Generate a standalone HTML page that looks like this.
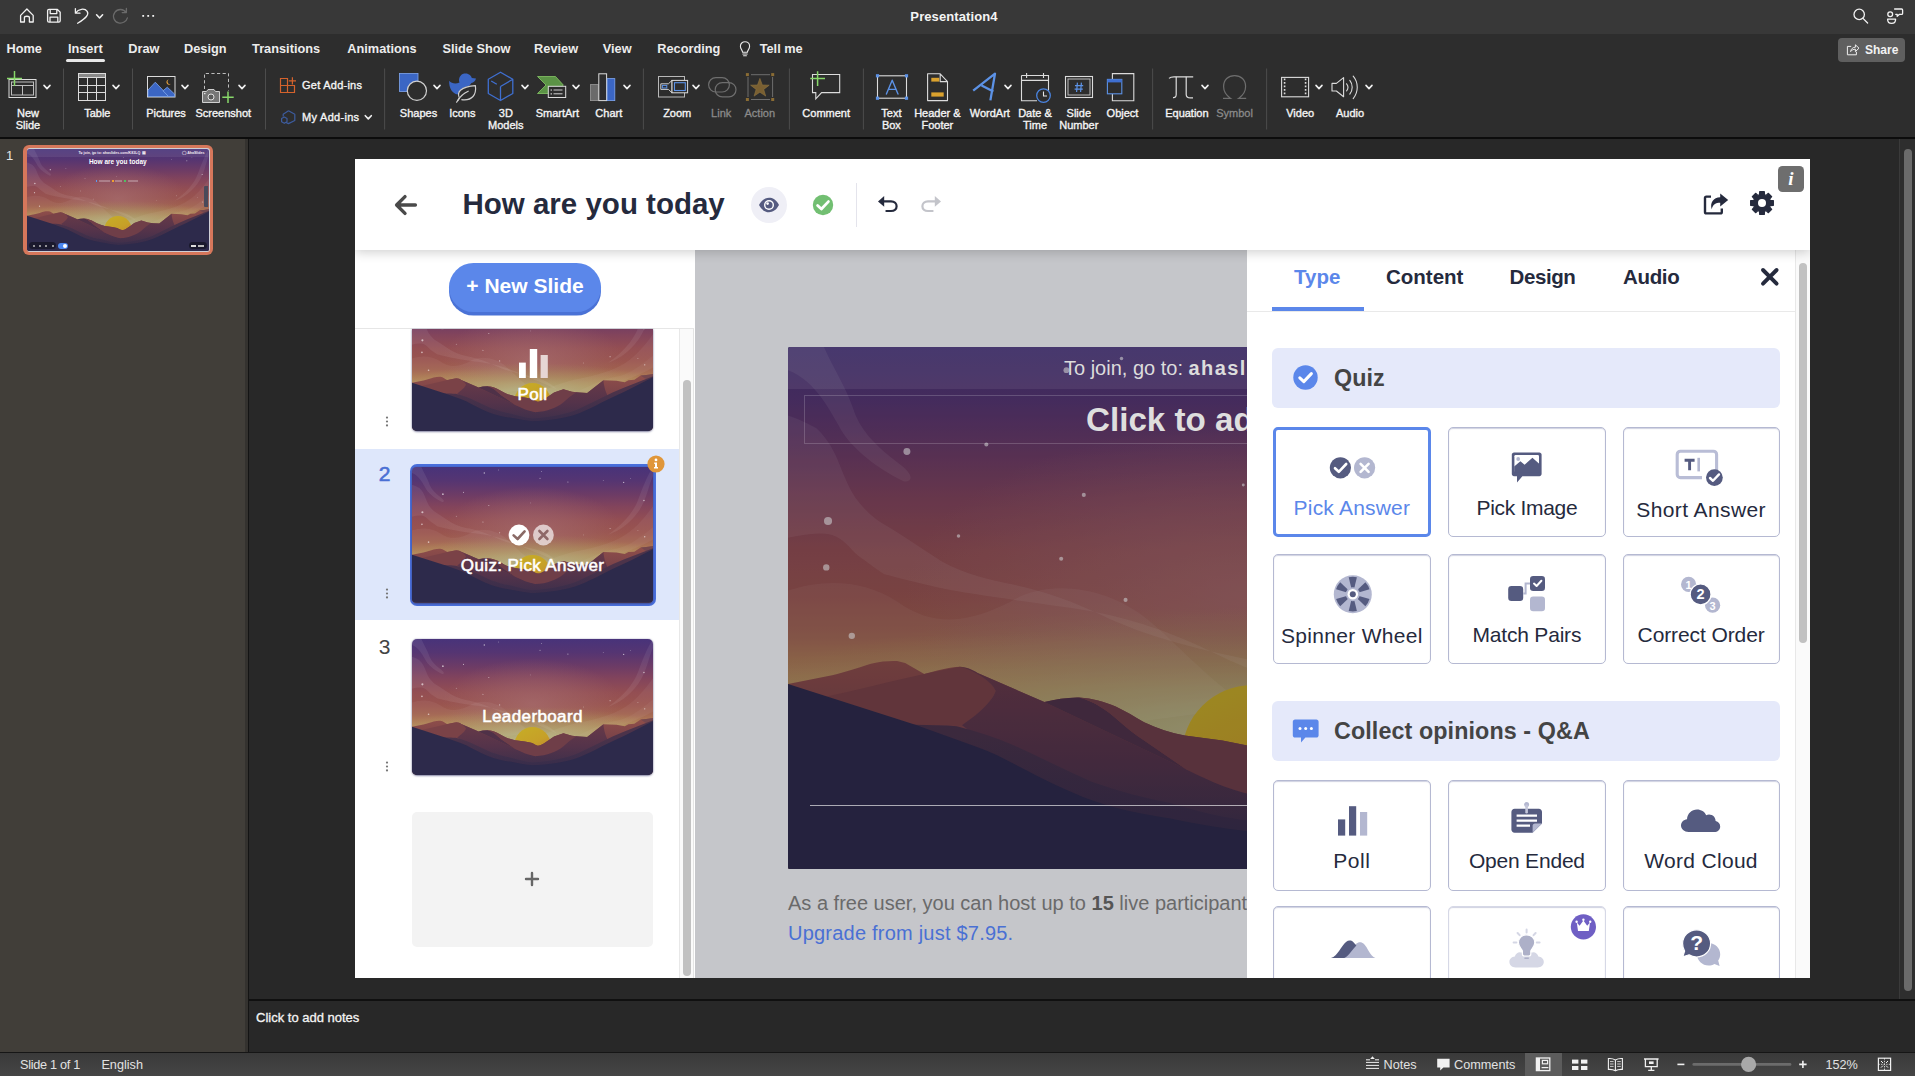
<!DOCTYPE html>
<html lang="en"><head><meta charset="utf-8"><title>Presentation4</title>
<style>
html,body{margin:0;padding:0}
body{width:1915px;height:1076px;overflow:hidden;background:#282828;position:relative;font-family:"Liberation Sans",sans-serif}
#leftpanel{position:absolute;left:0;top:139px;width:245px;height:915px;background:#413e39}
#leftedge{position:absolute;left:245px;top:139px;width:3px;height:914px;background:#34322f}
#leftline{position:absolute;left:247.5px;top:139px;width:1.5px;height:914px;background:#141414}
#editor{position:absolute;left:249px;top:139px;width:1666px;height:861px;background:#282828}
#vscroll{position:absolute;left:1899px;top:139px;width:16px;height:860px;background:#2e2e2e;border-left:1px solid #3a3a3a;box-sizing:border-box}
#vthumb{position:absolute;left:1904px;top:148.8px;width:8px;height:842.5px;border-radius:4px;background:#6b6b6b}
#notesline{position:absolute;left:249px;top:999px;width:1666px;height:1.5px;background:#101010}
#notes{position:absolute;left:249px;top:1000.5px;width:1666px;height:52px;background:#282828}
#notestxt{position:absolute;left:256px;top:1010px;font:13px "Liberation Sans",sans-serif;color:#f4f4f4;-webkit-text-stroke:0.3px #f4f4f4;white-space:nowrap}
#status{position:absolute;left:0;top:1053.4px;width:1915px;height:23px;background:linear-gradient(#3a3a3a,#454545)}
#statusline{position:absolute;left:0;top:1052.4px;width:1915px;height:1.2px;background:#161616}
.st{position:absolute;top:1057.8px;font:12.7px "Liberation Sans",sans-serif;color:#e2e2e2;white-space:nowrap}
.pnum{position:absolute;left:6px;top:148px;font:13px "Liberation Sans",sans-serif;color:#e6e6e6}
#pthumbsel{position:absolute;left:23px;top:145px;width:190px;height:110px;border-radius:6px;background:#d6775b}
#pthumbin{position:absolute;left:26.5px;top:148px;width:183.4px;height:103.6px;border-radius:3px;background:#cfcfd6;overflow:hidden}
#pthumbimg{position:absolute;left:0.8px;top:0.8px;width:181.8px;height:102.1px;border-radius:2.5px;overflow:hidden}

#titlebar{position:absolute;left:0;top:0;width:1915px;height:33.5px;background:#383838;}
.doctitle{position:absolute;left:0;width:1908px;top:8.7px;text-align:center;font:bold 13px "Liberation Sans",sans-serif;color:#f4f4f4;letter-spacing:0.1px}
#ribbon{position:absolute;left:0;top:0;width:1915px;height:137px;}
#ribbonbg{position:absolute;left:0;top:33px;width:1915px;height:104px;background:#2d2d2d}
#ribline{position:absolute;left:0;top:137px;width:1915px;height:2px;background:#0c0c0c}
.tab{position:absolute;top:40.8px;width:120px;text-align:center;font:bold 12.75px "Liberation Sans",sans-serif;color:#ececec;white-space:nowrap}
.tabline{position:absolute;left:66px;top:59px;width:39px;height:3px;border-radius:1.5px;background:#e8e8e8}
.share{position:absolute;left:1838px;top:38px;width:67px;height:24px;border-radius:4px;background:#5f5f5f}
.share span{position:absolute;left:27px;top:5px;font:bold 12px "Liberation Sans",sans-serif;color:#f2f2f2}
.rl{position:absolute;top:107px;width:100px;text-align:center;font:11px/12px "Liberation Sans",sans-serif;color:#f4f4f4;white-space:nowrap;-webkit-text-stroke:0.35px #f4f4f4}
.rl.dim{color:#8a8a8a;-webkit-text-stroke:0.3px #8a8a8a}
.rt{position:absolute;font:11px/12px "Liberation Sans",sans-serif;color:#f4f4f4;white-space:nowrap;-webkit-text-stroke:0.35px #f4f4f4}

#frame{position:absolute;left:0;top:0;width:1915px;height:1076px;clip-path:inset(159px 105px 98px 355px)}
#framebg{position:absolute;left:355px;top:159px;width:1455px;height:819px;background:#fff}
#center{position:absolute;left:695px;top:250px;width:553px;height:730px;background:#c5c6ca}
#preview{position:absolute;left:788px;top:347px;width:928px;height:522px;overflow:hidden;border-radius:2px;background:#2d2a4b}
.dimmer{position:absolute;left:0;top:0;width:928px;height:522px;background:rgba(10,8,20,0.22)}
.joinbar{position:absolute;left:0;top:0;width:928px;height:42px;background:rgba(255,255,255,0.07)}
.jointxt{position:absolute;left:276px;top:10px;font:20px "Liberation Sans",sans-serif;color:#dcdcdc;white-space:nowrap}
.jointxt b{letter-spacing:1.4px}
.titlebox{position:absolute;left:16px;top:48px;width:896px;height:48.6px;border:1px solid rgba(255,255,255,0.18);box-sizing:border-box}
.clicktxt{position:absolute;left:298px;top:54px;font:bold 33.2px "Liberation Sans",sans-serif;color:#dedede;white-space:nowrap}
.pline{position:absolute;left:22px;top:458px;width:884px;height:1.4px;background:rgba(255,255,255,0.62)}
.free1{position:absolute;left:788px;top:891.5px;font:20px "Liberation Sans",sans-serif;color:#6a6a6a;white-space:nowrap}
.free1 b{color:#555}
.free2{position:absolute;left:788px;top:921.5px;letter-spacing:0.22px;font:20px "Liberation Sans",sans-serif;color:#4a70d4;white-space:nowrap}
#list{position:absolute;left:355px;top:250px;width:340px;height:730px;background:#fff}
#listsel{position:absolute;left:355px;top:449px;width:325px;height:171px;background:#dee7fb}
.listsep{position:absolute;left:355px;top:328px;width:339px;height:1px;background:#e6e6e6}
.thumb{position:absolute;overflow:hidden;box-shadow:0 1px 2px rgba(60,60,110,0.55), 0 0 1.5px rgba(60,60,110,0.5)}
.thumbsel{position:absolute;left:409.5px;top:464.3px;width:246.8px;height:141.6px;border-radius:7px;background:#4a70dc}
.tl{position:absolute;left:0;width:100%;text-align:center;letter-spacing:0.38px;font:17px "Liberation Sans",sans-serif;color:#fff;white-space:nowrap;-webkit-text-stroke:0.55px #fff}
.plusbox{position:absolute;left:412px;top:812px;width:241px;height:135px;border-radius:5px;background:#f3f3f3}
.num{position:absolute;left:374.6px;width:20px;text-align:center;font:21px "Liberation Sans",sans-serif;color:#444}
.num.sel{color:#4a70d4;-webkit-text-stroke:0.6px #4a70d4}
.ltrack{position:absolute;left:679px;top:329px;width:15px;height:650px;background:#fafafa;border-left:1px solid #e8e8e8;border-right:1px solid #e4e4e4;box-sizing:border-box}
.lthumb{position:absolute;left:683px;top:380px;width:8px;height:596px;border-radius:4px;background:#c1c1c1}
#listtop{position:absolute;left:355px;top:250px;width:340px;height:78px;background:#fff}
.newslide{position:absolute;left:449px;top:263px;width:152px;height:49px;border-radius:26px;background:#5b87ea;box-shadow:0 3.5px 0 #4a72d6}
.newslide span{position:absolute;left:0;width:152px;top:11px;text-align:center;font:bold 21px "Liberation Sans",sans-serif;color:#fff;white-space:nowrap}
#panel{position:absolute;left:1247px;top:250px;width:563px;height:730px;background:#fff}
.ptab{position:absolute;top:265px;font:bold 20.5px "Liberation Sans",sans-serif;color:#252a3d;white-space:nowrap}
.ptab.sel{color:#5b87ea}
.pline2{position:absolute;left:1247px;top:311px;width:548px;height:1px;background:#e9e9e9}
.punder{position:absolute;left:1272px;top:307px;width:92px;height:4px;background:#5b87ea}
.sect{position:absolute;left:1272px;width:508px;height:60px;border-radius:6px;background:#e5e9fa}
.sect span{position:absolute;left:62px;top:17.3px;letter-spacing:0.1px;font:bold 23.3px "Liberation Sans",sans-serif;color:#444;white-space:nowrap}
.card{position:absolute;box-sizing:border-box;border:1.8px solid #b5b9d2;border-radius:5px;background:#fff;box-shadow:inset 0 1px 1px rgba(120,125,170,0.35)}
.card.sel{border:3px solid #5b87ea;box-shadow:none}
.card.dimc{border-color:#d6d8e6}
.clabel{position:absolute;left:-10px;right:-10px;text-align:center;font:21px "Liberation Sans",sans-serif;color:#252a3d;white-space:nowrap}
.card.sel .clabel{color:#5b87ea;margin-top:-1.5px}
.onum{position:absolute;width:10px;text-align:center;font:bold 10px "Liberation Sans",sans-serif;color:#fff;line-height:12px}
.qmark{position:absolute;left:1688.6px;top:931.4px;width:16px;text-align:center;font:bold 21px "Liberation Sans",sans-serif;color:#fff}
.ptrack{position:absolute;left:1795px;top:250px;width:15px;height:730px;background:#fafafa;border-left:1px solid #e8e8e8;box-sizing:border-box}
.pthumb{position:absolute;left:1799.4px;top:263px;width:7.6px;height:380px;border-radius:4px;background:#c1c1c1}
#ahead{position:absolute;left:355px;top:159px;width:1455px;height:91px;background:#fff;box-shadow:0 2px 11px rgba(0,0,0,0.2)}
.atitle{position:absolute;left:462.5px;top:187px;font:bold 29.5px "Liberation Sans",sans-serif;color:#252a3d;white-space:nowrap}
.eyebg{position:absolute;left:751px;top:187px;width:36px;height:36px;border-radius:18px;background:#efeff6}
.hdiv{position:absolute;left:855.5px;top:183px;width:1.5px;height:44px;background:#e4e4ec}
.ibtn{position:absolute;left:1778px;top:166px;width:26px;height:26px;border-radius:4.5px;background:#6e6e6e;color:#fff;font:italic bold 19px "Liberation Serif",serif;text-align:center;line-height:25px}
</style></head>
<body>

<svg width="0" height="0" style="position:absolute;left:-10px;top:-10px">
<defs>
<linearGradient id="sky" x1="0" y1="0" x2="0" y2="1">
<stop offset="0" stop-color="#48337a"/>
<stop offset="0.10" stop-color="#553572"/>
<stop offset="0.20" stop-color="#6c3b66"/>
<stop offset="0.29" stop-color="#82445c"/>
<stop offset="0.39" stop-color="#934e53"/>
<stop offset="0.48" stop-color="#99544f"/>
<stop offset="0.55" stop-color="#a0604d"/>
<stop offset="0.60" stop-color="#aa744f"/>
<stop offset="0.65" stop-color="#b28a56"/>
<stop offset="0.72" stop-color="#b29a5e"/>
<stop offset="0.8" stop-color="#b09c62"/>
</linearGradient>
<radialGradient id="glow" cx="800" cy="430" r="600" gradientUnits="userSpaceOnUse" gradientTransform="translate(0 215) scale(1 0.5)">
<stop offset="0" stop-color="#a87074" stop-opacity="0.62"/>
<stop offset="0.5" stop-color="#a46c70" stop-opacity="0.36"/>
<stop offset="1" stop-color="#a06a6e" stop-opacity="0"/>
</radialGradient>
<radialGradient id="glow2" cx="800" cy="670" r="1000" gradientUnits="userSpaceOnUse" gradientTransform="translate(0 522.6) scale(1 0.22)">
<stop offset="0" stop-color="#b8b68a" stop-opacity="1"/>
<stop offset="0.25" stop-color="#b2aa78" stop-opacity="0.9"/>
<stop offset="0.6" stop-color="#ac9a64" stop-opacity="0.5"/>
<stop offset="1" stop-color="#aa8e5c" stop-opacity="0"/>
</radialGradient>
<linearGradient id="sun" x1="0" y1="0" x2="0.5" y2="1">
<stop offset="0" stop-color="#c6ae26"/>
<stop offset="0.55" stop-color="#c6a028"/>
<stop offset="1" stop-color="#c07a35"/>
</linearGradient>
<linearGradient id="mA" x1="0" y1="530" x2="0" y2="760" gradientUnits="userSpaceOnUse">
<stop offset="0" stop-color="#8f4e4a"/><stop offset="1" stop-color="#6a3a48"/>
</linearGradient>
<linearGradient id="mB" x1="0" y1="550" x2="0" y2="820" gradientUnits="userSpaceOnUse">
<stop offset="0" stop-color="#693a48"/><stop offset="0.6" stop-color="#54334a"/><stop offset="1" stop-color="#40304b"/>
</linearGradient>
<linearGradient id="mC" x1="0" y1="640" x2="0" y2="840" gradientUnits="userSpaceOnUse">
<stop offset="0" stop-color="#4c334a"/><stop offset="1" stop-color="#382d4b"/>
</linearGradient>
<symbol id="scene" viewBox="0 0 1600 900" preserveAspectRatio="none">
<rect width="1600" height="900" fill="url(#sky)"/>
<rect width="1600" height="900" fill="url(#glow)"/>
<rect width="1600" height="900" fill="url(#glow2)"/>
<!-- wavy translucent bands -->
<path d="M0,0 L62,0 C80,40 100,70 112,105 C122,140 150,170 190,200 C215,218 218,232 200,232 C165,215 120,185 96,150 C72,110 50,60 0,40Z" fill="#fff" fill-opacity="0.075"/>
<path d="M0,118 C20,125 35,132 49,140 C70,160 80,180 89,203 C100,230 108,250 121,266 C140,290 155,300 175,311 C205,330 235,350 264,369 C305,392 350,402 390,410 C440,420 495,440 542,463 C620,500 700,520 800,540 C880,560 930,590 960,625 C880,585 800,560 740,530 C660,490 590,468 520,455 C430,440 330,430 255,414 C215,405 190,398 166,392 C148,380 135,370 121,360 C105,345 95,330 76,324 C50,318 25,324 0,329Z" fill="#fff" fill-opacity="0.07"/>
<path d="M0,420 C60,400 130,400 190,440 C260,490 330,470 400,430 C470,400 560,420 620,470 C680,520 740,590 800,620 L500,660 L0,600Z" fill="#fff" fill-opacity="0.05"/>
<path d="M1600,60 C1570,120 1560,220 1500,300 C1440,380 1380,420 1300,450 C1400,380 1470,300 1500,220 C1530,140 1560,60 1600,0Z" fill="#fff" fill-opacity="0.07"/>
<path d="M1600,260 C1540,340 1480,420 1380,470 C1280,520 1180,540 1080,560 C960,590 900,620 850,650 L1200,650 C1330,590 1460,560 1600,480Z" fill="#fff" fill-opacity="0.05"/>
<path d="M1600,400 C1520,460 1460,520 1360,540 C1260,560 1180,600 1100,640 L1600,620Z" fill="#fff" fill-opacity="0.04"/>
<!-- stars -->
<g fill="#fff" fill-opacity="0.6">
<circle cx="205" cy="180" r="6"/><circle cx="69" cy="300" r="7"/><circle cx="66" cy="380" r="5.5"/><circle cx="110" cy="498" r="5.5"/>
<circle cx="342" cy="168" r="3.5"/><circle cx="510" cy="255" r="3.5"/><circle cx="294" cy="326" r="3"/><circle cx="471" cy="365" r="3.5"/><circle cx="582" cy="436" r="3.5"/>
<circle cx="480" cy="40" r="5"/><circle cx="575" cy="20" r="3"/><circle cx="860" cy="30" r="3"/><circle cx="850" cy="75" r="3.5"/><circle cx="1035" cy="100" r="3.5"/>
<circle cx="1270" cy="90" r="3"/><circle cx="1405" cy="102" r="4.5"/><circle cx="1450" cy="76" r="2.5"/><circle cx="1540" cy="222" r="5"/>
<circle cx="1315" cy="408" r="3.5"/><circle cx="1500" cy="420" r="3"/><circle cx="1545" cy="462" r="4.5"/><circle cx="785" cy="238" r="2.5"/>
<circle cx="1140" cy="450" r="2.5"/>
</g>
<!-- sun -->
<circle cx="800" cy="704" r="121" fill="url(#sun)"/>
<!-- R1 back ridge (lit) -->
<path d="M0,581 L76,566 C100,560 125,552 143,546 C160,542 175,541 188,541.5 L202,545 L235,564 C255,558 280,552 296,551.5 C308,552 318,557 327,562 L442,612 C462,608 482,604 502,604.5 C525,606 545,612 565,620 C582,628 598,638 614,647 C636,658 660,665 684,670 L749,678.5 L792,687 C810,694 822,704 835,706 C850,706 862,700 875,692 L914,665 L943,645 L1005,623 L1062,640 L1111,646 L1163,649 L1271,564 L1358,567 L1412,577 L1437,564 L1476,561 L1518,533 L1555,530 L1600,523 V900 H0Z" fill="url(#mA)"/>
<!-- B: rounded darker blob on left -->
<path d="M60,604 C130,590 215,566 296,551.5 C325,560 352,578 358,593 C352,612 325,635 300,652 L219,651.5Z" fill="#7a4247"/>
<!-- C: shadow face of peak 2 -->
<path d="M296,551.5 C308,552 318,557 327,562 L442,612 L686,728 L820,776 L840,776 L840,842 L390,719 L300,652 C325,635 352,612 358,593 C352,578 325,560 296,551.5Z" fill="url(#mB)"/>
<!-- D: dark face of small peak 3 -->
<path d="M442,612 C462,608 482,604 502,604.5 C530,612 548,626 565,640 C582,655 598,668 614,678.5 L686,728Z" fill="#4f3148"/>
<!-- E: lit slope towards sun -->
<path d="M502,604.5 C525,606 545,612 565,620 C582,628 598,638 614,647 C636,658 660,665 684,670 L749,678.5 L792,687 C810,694 822,704 835,706 C850,706 862,700 875,692 L914,665 L943,645 L1005,623 L1062,640 L1090,644 C1060,660 1030,690 1000,715 C960,745 900,772 820,776 C770,768 730,750 686,728 L614,678.5 C598,668 582,655 565,640 C548,626 530,612 502,604.5Z" fill="#6f3e48"/>
<!-- C': shadow face of right peak -->
<path d="M1271,564 L1163,649 L1111,646 L1090,644 C1060,660 1030,690 1000,715 C960,745 900,772 820,776 L820,842 L1100,805 L1259,758 L1313,689 C1300,670 1290,650 1282,625 C1275,600 1272,580 1271,564Z" fill="url(#mB)"/>
<!-- right far edge darker tip -->
<path d="M1518,533 L1555,530 L1600,523 V546 L1560,562 C1545,550 1530,540 1518,533Z" fill="#6a4550" fill-opacity="0.7"/>
<!-- F: lower band above navy -->
<path d="M219.5,651.5 C245,652 270,652 291,654 C325,662 358,674 390,687 C435,708 480,730 524.6,750 C570,766 615,778 659,786 C705,800 750,812 800,817 C860,814 910,806 960,797 C1020,785 1070,770 1110,752 C1160,730 1210,704 1260,680 C1310,655 1360,632 1410,612 L1600,538 V900 H0 V640Z" fill="url(#mC)"/>
<!-- navy front -->
<path d="M0,581 L219.5,651.5 L327,690 C350,698 370,708 390,719 C440,745 480,765 525,782 C570,798 615,806 659,813 C710,824 750,830 800,836 C860,832 910,828 960,820 C1020,810 1070,798 1110,782 C1160,762 1210,738 1259,712 C1310,686 1360,662 1410,640 C1470,612 1540,575 1600,545 V900 H0Z" fill="#2d2a4b"/>
</symbol>
</defs>
</svg>

<div id="ribbonbg"></div><div id="ribline"></div>
<div id="titlebar"><svg style="position:absolute;left:0;top:0" width="1915" height="33" viewBox="0 0 1915 33"><path d="M20.6,15.4 L26.9,9 L33.2,15.4 V22 H29.4 V17.6 C29.4,15.8 24.4,15.8 24.4,17.6 V22 H20.6Z" fill="none" stroke="#f2f2f2" stroke-width="1.3" stroke-linejoin="round" stroke-linecap="round"/><path d="M47.6,10.8 C47.6,10 48.2,9.4 49,9.4 H57.4 L60.2,12.2 V20.8 C60.2,21.6 59.6,22.2 58.8,22.2 H49 C48.2,22.2 47.6,21.6 47.6,20.8Z M50.2,9.4 V13.6 H56.8 V9.4 M50,22.2 V17.2 H57.8 V22.2" fill="none" stroke="#f2f2f2" stroke-width="1.3" stroke-linejoin="round" stroke-linecap="round"/><path d="M75.4,8.6 V13.2 H80 M75.6,13 C78.4,8.8 84.6,7.8 87.2,11.4 C89.2,14.6 86.4,17.8 77.6,23.2" fill="none" stroke="#f2f2f2" stroke-width="1.3" stroke-linejoin="round" stroke-linecap="round"/><path d="M96.6,14.799999999999999 L99.6,18.0 L102.6,14.799999999999999" fill="none" stroke="#f0f0f0" stroke-width="1.6" stroke-linecap="round" stroke-linejoin="round"/><path d="M126.4,8.4 V12.6 H122.2 M126.2,12.6 C123.6,8.6 117.6,8.4 114.8,12.4 C112,16.4 114,21.6 118.6,22.8 C122.6,23.8 126.4,21.4 127.4,17.8" fill="none" stroke="#6a6a6a" stroke-width="1.3" stroke-linecap="round" stroke-linejoin="round"/><rect x="142.29999999999998" y="15" width="1.8" height="1.8" fill="#f2f2f2"/><rect x="147.29999999999998" y="15" width="1.8" height="1.8" fill="#f2f2f2"/><rect x="152.29999999999998" y="15" width="1.8" height="1.8" fill="#f2f2f2"/><circle cx="1859.2" cy="14.4" r="5.2" fill="none" stroke="#f2f2f2" stroke-width="1.3" stroke-linejoin="round" stroke-linecap="round"/><path d="M1863,18.4 L1867.6,23" fill="none" stroke="#f2f2f2" stroke-width="1.3" stroke-linejoin="round" stroke-linecap="round"/><circle cx="1890.2" cy="14.2" r="2.4" fill="none" stroke="#f2f2f2" stroke-width="1.3" stroke-linejoin="round" stroke-linecap="round"/><path d="M1887.6,19.2 H1895.6 C1895.6,22.2 1893.8,23.4 1891.6,23.4 C1889.4,23.4 1887.6,22.2 1887.6,19.2Z" fill="none" stroke="#f2f2f2" stroke-width="1.3" stroke-linejoin="round" stroke-linecap="round"/><path d="M1894.6,9 H1901.6 C1902.2,9 1902.6,9.4 1902.6,10 V13.4 C1902.6,14 1902.2,14.4 1901.6,14.4 H1899.2 L1897.2,16.2 V14.4 H1895.8" fill="none" stroke="#f2f2f2" stroke-width="1.3" stroke-linejoin="round" stroke-linecap="round"/></svg><div class="doctitle">Presentation4</div></div>
<div id="ribbon">
<div class="tab" style="left:-35.8px">Home</div>
<div class="tab" style="left:25.3px">Insert</div>
<div class="tab" style="left:83.9px">Draw</div>
<div class="tab" style="left:145.3px">Design</div>
<div class="tab" style="left:226.1px">Transitions</div>
<div class="tab" style="left:322.0px">Animations</div>
<div class="tab" style="left:416.4px">Slide Show</div>
<div class="tab" style="left:496.1px">Review</div>
<div class="tab" style="left:557.2px">View</div>
<div class="tab" style="left:628.8px">Recording</div>
<div class="tab" style="left:721.2px">Tell me</div>
<div class="tabline"></div>
<svg style="position:absolute;left:737px;top:39px" width="16" height="20" viewBox="0 0 16 20"><path d="M5.6,13.2 C5.6,11.2 3.4,10.2 3.4,7.2 C3.4,4.6 5.4,2.8 8,2.8 C10.6,2.8 12.6,4.6 12.6,7.2 C12.6,10.2 10.4,11.2 10.4,13.2Z M5.8,15 H10.2 M6.6,16.8 H9.4" fill="none" stroke="#e8e8e8" stroke-width="1.1" stroke-linecap="round" stroke-linejoin="round"/></svg>
<div class="share"><svg width="14" height="13" viewBox="0 0 14 13" style="position:absolute;left:8px;top:5px"><path d="M5.2,3.4 H1.4 V11.8 H10.4 V8.8 M4.6,8.6 C5,5.8 7,4.2 9.4,4.2 V1.8 L13,5.2 L9.4,8.6 V6.2 C7.4,6.2 5.8,7 4.6,8.6Z" fill="none" stroke="#efefef" stroke-width="1" stroke-linejoin="round"/></svg><span>Share</span></div>
<svg style="position:absolute;left:0;top:0" width="1915" height="138" viewBox="0 0 1915 138"><rect x="63.0" y="68.5" width="1" height="61" fill="#4c4c4c"/><rect x="132.0" y="68.5" width="1" height="61" fill="#4c4c4c"/><rect x="265.0" y="68.5" width="1" height="61" fill="#4c4c4c"/><rect x="384.1" y="68.5" width="1" height="61" fill="#4c4c4c"/><rect x="642.9" y="68.5" width="1" height="61" fill="#4c4c4c"/><rect x="788.9" y="68.5" width="1" height="61" fill="#4c4c4c"/><rect x="862.9" y="68.5" width="1" height="61" fill="#4c4c4c"/><rect x="1152.1" y="68.5" width="1" height="61" fill="#4c4c4c"/><rect x="1266.1" y="68.5" width="1" height="61" fill="#4c4c4c"/><rect x="9" y="79.5" width="27" height="18" fill="none" stroke="#dcdcdc" stroke-width="1"/><rect x="11.5" y="82" width="22" height="13" fill="none" stroke="#bdbdbd" stroke-width="1"/><path d="M11.5,85.5 H33.5 M22.5,85.5 V95" stroke="#bdbdbd" stroke-width="1" fill="none"/><path d="M7,78.5 H22 M14.5,71 V86" stroke="#88d86a" stroke-width="1.5" fill="none"/><path d="M44,85.4 L47,88.6 L50,85.4" fill="none" stroke="#f0f0f0" stroke-width="1.6" stroke-linecap="round" stroke-linejoin="round"/><rect x="78.5" y="73.5" width="27" height="27" fill="none" stroke="#dcdcdc" stroke-width="1"/><rect x="79" y="74" width="26" height="3.5" fill="#8a8a8a"/><path d="M78.5,77.5 H105.5 M78.5,85.5 H105.5 M78.5,92.5 H105.5 M87.5,77.5 V100.5 M96.5,77.5 V100.5" stroke="#dcdcdc" stroke-width="1" fill="none"/><path d="M113,85.4 L116,88.6 L119,85.4" fill="none" stroke="#f0f0f0" stroke-width="1.6" stroke-linecap="round" stroke-linejoin="round"/><rect x="147.5" y="76.5" width="27.5" height="20.5" fill="#2a2a2a" stroke="#dcdcdc" stroke-width="1"/><path d="M148,96.5 L148,90 L155.3,82.2 L169,96.5Z" fill="#3b66c4" stroke="#7fa6ee" stroke-width="0.8" stroke-linejoin="round"/><path d="M163,90.8 L167.3,87.2 L174.5,94 L174.5,96.5 L168.5,96.5Z" fill="#3b66c4" stroke="#7fa6ee" stroke-width="0.8" stroke-linejoin="round"/><path d="M168.6,79.6 A2.6,2.6 0 1 0 171.2,83.6 A2.2,2.2 0 0 1 168.6,79.6Z" fill="#e8a23c"/><path d="M182,85.4 L185,88.6 L188,85.4" fill="none" stroke="#f0f0f0" stroke-width="1.6" stroke-linecap="round" stroke-linejoin="round"/><path d="M204.5,89 V73.5 H228.5 V90.5" fill="none" stroke="#bdbdbd" stroke-width="1" stroke-dasharray="3.2 2.4"/><path d="M202.5,91.5 H206.5 L208,89.5 H214 L215.5,91.5 H219.5 V102.5 H202.5Z" fill="#767676" stroke="#d0d0d0" stroke-width="1" stroke-linejoin="round"/><circle cx="211" cy="97" r="3" fill="#5a5a5a" stroke="#e0e0e0" stroke-width="1"/><rect x="204" y="93" width="1.5" height="1.2" fill="#e0e0e0"/><path d="M222.3,97.3 H233.7 M228,91.6 V103" stroke="#88d86a" stroke-width="1.5" fill="none"/><path d="M239,85.4 L242,88.6 L245,85.4" fill="none" stroke="#f0f0f0" stroke-width="1.6" stroke-linecap="round" stroke-linejoin="round"/><path d="M280.5,78.5 H287.5 V92.5 H280.5Z M287.5,85.5 H294.5 V92.5 H287.5 M280.5,85.5 H287.5" fill="none" stroke="#d4622c" stroke-width="1.2"/><path d="M288.8,80.8 H296 M292.4,77.2 V84.4" stroke="#d4622c" stroke-width="1.2" fill="none"/><path d="M288.5,110.8 L294.8,114.2 V120.5 L288.5,123.6 L285.5,122.2 M283.2,116.6 V114.2 L288.5,110.8" fill="none" stroke="#3d5c9e" stroke-width="1.2" stroke-linejoin="round"/><path d="M284.3,117 L287,118.6 V121.7 L284.3,123.3 L281.6,121.7 V118.6Z" fill="none" stroke="#3d5c9e" stroke-width="1.2" stroke-linejoin="round"/><path d="M365.3,115.7 L368.3,118.89999999999999 L371.3,115.7" fill="none" stroke="#f0f0f0" stroke-width="1.6" stroke-linecap="round" stroke-linejoin="round"/><rect x="399.5" y="73.5" width="18.5" height="18" fill="#3b66c4" stroke="#7fa6ee" stroke-width="0.8"/><circle cx="416.9" cy="90.8" r="9.6" fill="#2d2d2d" stroke="#cfcfcf" stroke-width="1.2"/><path d="M434,85.4 L437,88.6 L440,85.4" fill="none" stroke="#f0f0f0" stroke-width="1.6" stroke-linecap="round" stroke-linejoin="round"/><path d="M449.2,80.8 C451.5,83.5 455.5,84.2 459.5,82.6 C458.2,79.2 459.8,74.6 464.2,73.6 C468.4,72.8 471.4,75.6 471.8,78 L476,78.6 C475.4,81.2 473.6,82.6 471.4,83 C470.6,84.4 469.6,85.4 468.6,86.2 C464,86.4 459.6,89.4 457.6,94.6 C452.6,93.6 448.8,88.6 449.2,80.8Z" fill="#3b66c4"/><path d="M456.6,102.2 C459,97.6 463,93.8 468.2,91.4" fill="none" stroke="#cfcfcf" stroke-width="1.2" stroke-linecap="round"/><path d="M459.2,97.6 C456.8,92.4 460.4,86.6 475.4,85.6 C476.6,94.4 472.4,101.2 461.4,99.6" fill="#2d2d2d" stroke="#cfcfcf" stroke-width="1.2" stroke-linejoin="round"/><path d="M457.8,100.6 C460,96.6 463.6,93.2 468.2,91.2" fill="none" stroke="#cfcfcf" stroke-width="1.2" stroke-linecap="round"/><path d="M500.5,72.2 L512.8,79.3 V93.5 L500.5,100.5 L488.3,93.5 V79.3Z M500.5,86.5 L512.8,79.3 M500.5,86.5 V100.5 M496.8,84.3 L491.2,81" fill="none" stroke="#3f6fd0" stroke-width="1.3" stroke-linejoin="round"/><path d="M522,85.4 L525,88.6 L528,85.4" fill="none" stroke="#f0f0f0" stroke-width="1.6" stroke-linecap="round" stroke-linejoin="round"/><path d="M537.5,76.5 H555.5 L563.3,85 L555.5,93.5 H537.5 L546,85Z" fill="#5b9346" stroke="#86c766" stroke-width="0.8" stroke-linejoin="round"/><rect x="548.3" y="86.3" width="17.4" height="11.2" fill="#2d2d2d" stroke="#dcdcdc" stroke-width="1"/><path d="M553.5,90 H562.5 M553.5,93.8 H562.5" stroke="#cfcfcf" stroke-width="1"/><rect x="550.6" y="89.4" width="1.3" height="1.3" fill="#cfcfcf"/><rect x="550.6" y="93.2" width="1.3" height="1.3" fill="#cfcfcf"/><path d="M573,85.4 L576,88.6 L579,85.4" fill="none" stroke="#f0f0f0" stroke-width="1.6" stroke-linecap="round" stroke-linejoin="round"/><rect x="590.5" y="84.6" width="7.8" height="16" fill="#6a6a6a" stroke="#9a9a9a" stroke-width="0.8"/><rect x="598.8" y="73.8" width="7.8" height="26.8" fill="#2d2d2d" stroke="#dcdcdc" stroke-width="1"/><rect x="607.2" y="78.6" width="7.6" height="22" fill="#3b66c4" stroke="#7fa6ee" stroke-width="0.8"/><path d="M624,85.4 L627,88.6 L630,85.4" fill="none" stroke="#f0f0f0" stroke-width="1.6" stroke-linecap="round" stroke-linejoin="round"/><rect x="658.5" y="76.5" width="26" height="20.5" fill="none" stroke="#b8b8b8" stroke-width="1"/><path d="M660.8,83.8 H668.4 L672,80.4 V92.8 L668.4,89.4 H660.8Z" fill="#2d2d2d" stroke="#cfcfcf" stroke-width="1" stroke-linejoin="round"/><rect x="662.4" y="85.4" width="4.4" height="2.6" fill="none" stroke="#5c92e6" stroke-width="1"/><rect x="672" y="80.4" width="15.6" height="12.4" fill="#2d2d2d" stroke="#dcdcdc" stroke-width="1"/><rect x="674.5" y="82.7" width="10.8" height="7.8" fill="none" stroke="#5c92e6" stroke-width="1.1"/><path d="M693,85.4 L696,88.6 L699,85.4" fill="none" stroke="#f0f0f0" stroke-width="1.6" stroke-linecap="round" stroke-linejoin="round"/><rect x="708.6" y="77.6" width="20.8" height="14.4" rx="7.2" fill="none" stroke="#6e6e6e" stroke-width="1.2"/><rect x="715.2" y="82.6" width="20.8" height="14.2" rx="7.1" fill="none" stroke="#6e6e6e" stroke-width="1.2"/><path d="M751,74.7 H770 M772.6,77 V97 M770,99.5 H751 M748,97 V77" fill="none" stroke="#6e6e6e" stroke-width="1"/><rect x="745.9" y="73.1" width="3" height="3" fill="#8a6c34"/><rect x="771.2" y="73.1" width="3" height="3" fill="#8a6c34"/><rect x="745.9" y="98.0" width="3" height="3" fill="#8a6c34"/><rect x="771.2" y="98.0" width="3" height="3" fill="#8a6c34"/><polygon points="759.9,78.4 762.3,85.0 769.2,85.2 763.7,89.4 765.7,96.1 759.9,92.2 754.1,96.1 756.1,89.4 750.6,85.2 757.5,85.0" fill="#7a6032" stroke="#8f7440" stroke-width="0.6"/><path d="M812.5,74.5 H839.7 V92.6 H821.6 L815.8,98.8 V92.6 H812.5Z" fill="none" stroke="#dcdcdc" stroke-width="1.1" stroke-linejoin="miter"/><rect x="809" y="70" width="11" height="12" fill="#2d2d2d" opacity="0"/><path d="M810.2,78.6 H825 M817.6,71.2 V86" stroke="#88d86a" stroke-width="1.5" fill="none"/><rect x="877.5" y="75.8" width="29" height="22.4" fill="none" stroke="#dcdcdc" stroke-width="1.1"/><rect x="875.9" y="74.2" width="3.2" height="3.2" fill="#5c92e6"/><rect x="904.9" y="74.2" width="3.2" height="3.2" fill="#5c92e6"/><rect x="875.9" y="96.60000000000001" width="3.2" height="3.2" fill="#5c92e6"/><rect x="904.9" y="96.60000000000001" width="3.2" height="3.2" fill="#5c92e6"/><path d="M886.4,94 L892.2,80.2 L898,94 M888.4,89.4 H896" fill="none" stroke="#5c92e6" stroke-width="1.4" stroke-linejoin="round" stroke-linecap="round"/><path d="M927.6,73.8 H940.2 L947.5,81.6 V100.6 H927.6Z M940.2,73.8 V81.6 H947.5" fill="none" stroke="#dcdcdc" stroke-width="1.1" stroke-linejoin="round"/><rect x="931.3" y="77.8" width="8" height="3.8" fill="#dba22e"/><rect x="931.3" y="92.4" width="12.4" height="4.2" fill="#dba22e"/><path d="M973.2,90.6 L995,73.6 L990.4,100.4 M981.6,85.4 L993.4,91.6" fill="none" stroke="#5c92e6" stroke-width="2.3" stroke-linejoin="round" stroke-linecap="butt"/><path d="M1005,85.4 L1008,88.6 L1011,85.4" fill="none" stroke="#f0f0f0" stroke-width="1.6" stroke-linecap="round" stroke-linejoin="round"/><path d="M1021.5,75.5 H1048.5 V94 M1037,100.8 H1021.5 V75.5 M1021.5,80.4 H1048.5 M1026.6,73 V78 M1043.5,73 V78" fill="none" stroke="#dcdcdc" stroke-width="1.1"/><circle cx="1043.5" cy="95.6" r="6.8" fill="#2d2d2d" stroke="#4a84e0" stroke-width="1.3"/><path d="M1043.5,91.6 V96 H1047" fill="none" stroke="#e6e6e6" stroke-width="1.1"/><rect x="1065.5" y="76.5" width="27" height="21" fill="none" stroke="#dcdcdc" stroke-width="1.1"/><rect x="1068" y="79" width="22" height="16" fill="none" stroke="#bdbdbd" stroke-width="1"/><path d="M1077.4,82.6 L1076.6,92 M1081.4,82.6 L1080.6,92 M1075,85.6 H1083.2 M1074.6,89.2 H1082.8" fill="none" stroke="#5c92e6" stroke-width="1.2"/><path d="M1112.4,79 V73.6 H1133.8 V100.8 H1112.4 V94" fill="none" stroke="#dcdcdc" stroke-width="1.1"/><rect x="1107.4" y="79.4" width="14.4" height="14.4" fill="#2d2d2d" stroke="#5c92e6" stroke-width="1.1"/><rect x="1107.4" y="79.4" width="14.4" height="3" fill="#3f6fd0"/><path d="M1169,78.4 C1170.4,77 1172,76.8 1174,76.8 H1193.2" fill="none" stroke="#dcdcdc" stroke-width="1.2"/><path d="M1176.2,76.8 V94.6 C1176.2,96.8 1175,97.8 1173,97.6" fill="none" stroke="#dcdcdc" stroke-width="1.2"/><path d="M1186.2,76.8 V94.4 C1186.2,97 1188,97.8 1190.4,97.8 H1193" fill="none" stroke="#dcdcdc" stroke-width="1.2"/><path d="M1202,85.4 L1205,88.6 L1208,85.4" fill="none" stroke="#f0f0f0" stroke-width="1.6" stroke-linecap="round" stroke-linejoin="round"/><path d="M1223,98.4 H1230.6 C1226.4,95.6 1223.6,91.6 1223.6,86.6 C1223.6,79.8 1228.2,75.6 1234.6,75.6 C1241,75.6 1245.6,79.8 1245.6,86.6 C1245.6,91.6 1242.8,95.6 1238.6,98.4 H1246.2" fill="none" stroke="#6e6e6e" stroke-width="1.2"/><rect x="1281.6" y="77.4" width="27" height="19.4" fill="none" stroke="#dcdcdc" stroke-width="1.1"/><path d="M1284.6,78.6 V96 M1305.6,78.6 V96" stroke="#dcdcdc" stroke-width="1.6" stroke-dasharray="1.6 1.9" fill="none"/><path d="M1316,85.4 L1319,88.6 L1322,85.4" fill="none" stroke="#f0f0f0" stroke-width="1.6" stroke-linecap="round" stroke-linejoin="round"/><path d="M1332,83.4 H1336.4 L1343.6,77.6 V96.8 L1336.4,91 H1332Z" fill="none" stroke="#dcdcdc" stroke-width="1.1" stroke-linejoin="round"/><path d="M1346.6,83.8 C1348.2,85.8 1348.2,88.8 1346.6,90.8 M1349.8,80.4 C1353,84.2 1353,90.4 1349.8,94.2 M1353.2,76.2 C1358.6,82.6 1358.6,92 1353.2,98.6" fill="none" stroke="#dcdcdc" stroke-width="1.1" stroke-linecap="round"/><path d="M1366,85.4 L1369,88.6 L1372,85.4" fill="none" stroke="#f0f0f0" stroke-width="1.6" stroke-linecap="round" stroke-linejoin="round"/></svg>
<div class="rl" style="left:-22.0px">New<br>Slide</div>
<div class="rl" style="left:47.3px">Table</div>
<div class="rl" style="left:116.0px">Pictures</div>
<div class="rl" style="left:173.3px">Screenshot</div>
<div class="rl" style="left:368.5px">Shapes</div>
<div class="rl" style="left:412.3px">Icons</div>
<div class="rl" style="left:455.8px">3D<br>Models</div>
<div class="rl" style="left:507.4px">SmartArt</div>
<div class="rl" style="left:558.8px">Chart</div>
<div class="rl" style="left:627.2px">Zoom</div>
<div class="rl dim" style="left:671.2px">Link</div>
<div class="rl dim" style="left:709.8px">Action</div>
<div class="rl" style="left:776.2px">Comment</div>
<div class="rl" style="left:841.4px">Text<br>Box</div>
<div class="rl" style="left:887.4px">Header &amp;<br>Footer</div>
<div class="rl" style="left:939.8px">WordArt</div>
<div class="rl" style="left:985.0px">Date &amp;<br>Time</div>
<div class="rl" style="left:1028.8px">Slide<br>Number</div>
<div class="rl" style="left:1072.5px">Object</div>
<div class="rl" style="left:1136.9px">Equation</div>
<div class="rl dim" style="left:1184.5px">Symbol</div>
<div class="rl" style="left:1250.2px">Video</div>
<div class="rl" style="left:1300.0px">Audio</div>
<div class="rt" style="left:302px;top:79px;letter-spacing:0.25px">Get Add-ins</div>
<div class="rt" style="left:302px;top:111px;letter-spacing:0.3px">My Add-ins</div>
</div>
<div id="leftpanel"></div><div id="leftedge"></div><div id="leftline"></div>
<div class="pnum">1</div>
<div id="pthumbsel"></div><div id="pthumbin"><div id="pthumbimg">
<svg class="" style="position:absolute;left:0px;top:0px;" width="182" height="103.4"><use href="#scene" x="0" y="0" width="182" height="103.4"/></svg>
<div style="position:absolute;left:0;top:0;width:181px;height:8px;background:rgba(255,255,255,0.08)"></div>
<div style="position:absolute;left:0;width:181px;top:9.2px;text-align:center;font:bold 6.5px 'Liberation Sans',sans-serif;color:#fff;white-space:nowrap">How are you today</div>
<div style="position:absolute;left:0;width:170px;top:2.2px;text-align:center;font:bold 3.6px 'Liberation Sans',sans-serif;color:#f0e8f0;white-space:nowrap">To join, go to: ahaslides.com/K83LQ &nbsp;&#9638;</div>
<div style="position:absolute;left:155px;top:2.2px;font:bold 3.6px 'Liberation Sans',sans-serif;color:#f0e8f0;white-space:nowrap">&#9711; AhaSlides</div>
<div style="position:absolute;left:68.5px;top:31.4px;width:1.7px;height:1.7px;background:#5b9bf0"></div><div style="position:absolute;left:72px;top:30.6px;width:11px;height:1.6px;background:rgba(255,255,255,0.26);margin-top:1px"></div>
<div style="position:absolute;left:84.6px;top:31.4px;width:1.7px;height:1.7px;background:#f0a030"></div><div style="position:absolute;left:88.2px;top:30.6px;width:7px;height:1.6px;background:rgba(255,255,255,0.26);margin-top:1px"></div>
<div style="position:absolute;left:97px;top:31.4px;width:1.7px;height:1.7px;background:#50c060"></div><div style="position:absolute;left:100.6px;top:30.6px;width:10px;height:1.6px;background:rgba(255,255,255,0.26);margin-top:1px"></div>
<div style="position:absolute;left:176.6px;top:37px;width:4.4px;height:21px;background:#4a4a5a;border-radius:1px 0 0 1px"></div>
<div style="position:absolute;left:2px;top:93.6px;width:27px;height:7px;border-radius:3.5px;background:rgba(20,20,35,0.75)"></div>
<div style="position:absolute;left:5.5px;top:95.6px;width:2.4px;height:2.4px;border-radius:1px;background:#bbb;margin:0.3px"></div>
<div style="position:absolute;left:11.5px;top:95.6px;width:2.4px;height:2.4px;border-radius:1px;background:#bbb;margin:0.3px"></div>
<div style="position:absolute;left:17.5px;top:95.6px;width:2.4px;height:2.4px;border-radius:1px;background:#bbb;margin:0.3px"></div>
<div style="position:absolute;left:24px;top:95.6px;width:2.4px;height:2.4px;border-radius:1px;background:#bbb;margin:0.3px"></div>
<div style="position:absolute;left:31px;top:94px;width:9.6px;height:6px;border-radius:3px;background:#4a86f0"></div><div style="position:absolute;left:36.2px;top:95px;width:4px;height:4px;border-radius:2px;background:#fff"></div>
<div style="position:absolute;left:161.6px;top:93.6px;width:18px;height:7px;border-radius:3.5px;background:rgba(20,20,35,0.75)"></div>
<div style="position:absolute;left:164px;top:96px;width:5px;height:2.4px;background:#ddd"></div><div style="position:absolute;left:171px;top:96px;width:6px;height:2.4px;background:#bbb"></div>
</div></div>
<div id="editor"></div>
<div id="vscroll"></div><div id="vthumb"></div>
<div id="notesline"></div><div id="notes"></div><div id="notestxt">Click to add notes</div>
<div id="frame"><div id="framebg"></div>
<div id="center"></div>
<div id="preview">
<svg class="" style="position:absolute;left:0px;top:0px;" width="928" height="522"><use href="#scene" x="0" y="0" width="928" height="522"/></svg>
<div class="dimmer"></div>
<div class="joinbar"></div>
<div class="jointxt">To join, go to: <b>ahaslides.com/K83LQ</b></div>
<div class="titlebox"></div>
<div class="clicktxt">Click to add a title</div>
<div class="pline"></div>
</div>
<div class="free1">As a free user, you can host up to <b>15</b> live participants.</div>
<div class="free2">Upgrade from just $7.95.</div>
<div id="list"></div>
<div id="listsel"></div>
<div class="listsep"></div>
<div class="thumb" style="left:412px;top:329px;width:241px;height:102px;border-radius:0 0 5px 5px"><svg class="" style="position:absolute;left:0px;top:-34px;" width="241" height="136"><use href="#scene" x="0" y="0" width="241" height="136"/></svg><svg style="position:absolute;left:106px;top:19px" width="30" height="30" viewBox="0 0 30 30"><rect x="1" y="14.6" width="6.8" height="15.4" fill="#fff"/><rect x="11.8" y="1" width="7.4" height="29" fill="#fff"/><rect x="22.6" y="7" width="7.2" height="23" fill="#e6d6d4"/></svg><div class="tl" style="top:55.5px">Poll</div></div>
<div class="thumbsel"></div>
<div class="thumb" style="left:412.1px;top:467px;width:241px;height:135.8px;border-radius:4.5px"><svg class="" style="position:absolute;left:0px;top:0px;" width="241" height="135.8"><use href="#scene" x="0" y="0" width="241" height="135.8"/></svg><svg style="position:absolute;left:95px;top:56px" width="50" height="24" viewBox="0 0 50 24"><circle cx="12" cy="12" r="10.4" fill="#fff"/><path d="M6.6,12.4 L10.6,16 L17.6,8.4" fill="none" stroke="#8a6a66" stroke-width="2.6" stroke-linejoin="round" stroke-linecap="round"/><circle cx="36.4" cy="12" r="10.4" fill="#e9dcdc" fill-opacity="0.85"/><path d="M32.4,8 L40.4,16 M40.4,8 L32.4,16" fill="none" stroke="#8e6868" stroke-width="2.6" stroke-linecap="round"/></svg><div class="tl" style="top:88.5px">Quiz: Pick Answer</div></div>
<div class="thumb" style="left:412px;top:639px;width:241px;height:136px;border-radius:5px"><svg class="" style="position:absolute;left:0px;top:0px;" width="241" height="136"><use href="#scene" x="0" y="0" width="241" height="136"/></svg><div class="tl" style="top:67.5px">Leaderboard</div></div>
<div class="plusbox"><svg width="16" height="16" viewBox="0 0 16 16" style="position:absolute;left:112px;top:59px"><path d="M2,8 H14 M8,2 V14" stroke="#666" stroke-width="2.4" stroke-linecap="round"/></svg></div>
<div class="num sel" style="top:462px">2</div>
<div class="num" style="top:635px">3</div>
<svg style="position:absolute;left:384px;top:416px" width="6" height="11" viewBox="0 0 6 11"><circle cx="3" cy="1.6" r="1.1" fill="#777"/><circle cx="3" cy="5.5" r="1.1" fill="#777"/><circle cx="3" cy="9.4" r="1.1" fill="#777"/></svg>
<svg style="position:absolute;left:384px;top:588px" width="6" height="11" viewBox="0 0 6 11"><circle cx="3" cy="1.6" r="1.1" fill="#777"/><circle cx="3" cy="5.5" r="1.1" fill="#777"/><circle cx="3" cy="9.4" r="1.1" fill="#777"/></svg>
<svg style="position:absolute;left:384px;top:761px" width="6" height="11" viewBox="0 0 6 11"><circle cx="3" cy="1.6" r="1.1" fill="#777"/><circle cx="3" cy="5.5" r="1.1" fill="#777"/><circle cx="3" cy="9.4" r="1.1" fill="#777"/></svg>
<svg style="position:absolute;left:647px;top:455px" width="18" height="18" viewBox="0 0 18 18"><circle cx="9" cy="9" r="8.6" fill="#e0963a"/><circle cx="9" cy="4.9" r="1.4" fill="#fff"/><path d="M7.2,7.6 H10 V12 H11 V13.4 H7 V12 H8 V9 H7.2Z" fill="#fff"/></svg>
<div class="ltrack"></div><div class="lthumb"></div>
<div id="listtop"></div>
<div class="newslide"><span>+ New Slide</span></div>
<div id="panel"></div>
<div class="ptab sel" style="left:1294px">Type</div>
<div class="ptab" style="left:1386px">Content</div>
<div class="ptab" style="left:1509.5px;letter-spacing:-0.4px">Design</div>
<div class="ptab" style="left:1623px;letter-spacing:-0.35px">Audio</div>
<svg style="position:absolute;left:1759px;top:266px" width="22" height="22" viewBox="0 0 22 22"><path d="M4,4 L17.6,17.6 M17.6,4 L4,17.6" stroke="#252a3d" stroke-width="3.9" stroke-linecap="round"/></svg>
<div class="pline2"></div><div class="punder"></div>
<div class="sect" style="top:348px"><span>Quiz</span></div>
<svg style="position:absolute;left:1293px;top:365px" width="25" height="25" viewBox="0 0 25 25"><circle cx="12.5" cy="12.5" r="12.2" fill="#5b87ea"/><path d="M6.8,12.8 L10.8,16.6 L18.4,8.6" fill="none" stroke="#fff" stroke-width="3" stroke-linejoin="round" stroke-linecap="round"/></svg>
<div class="sect" style="top:701px"><span>Collect opinions - Q&amp;A</span></div>
<svg style="position:absolute;left:1292px;top:719px" width="28" height="25" viewBox="0 0 28 25"><path d="M3,0.6 H24.4 C25.6,0.6 26.6,1.6 26.6,2.8 V16.4 C26.6,17.6 25.6,18.6 24.4,18.6 H13.4 L9,23.4 V18.6 H3 C1.8,18.6 0.8,17.6 0.8,16.4 V2.8 C0.8,1.6 1.8,0.6 3,0.6Z" fill="#5b87ea"/><circle cx="8" cy="9.6" r="1.5" fill="#fff"/><circle cx="13.7" cy="9.6" r="1.5" fill="#fff"/><circle cx="19.4" cy="9.6" r="1.5" fill="#fff"/></svg>
<div class="card sel" style="left:1273.2px;top:426.6px;width:157.4px;height:110.8px"><div class="clabel" style="top:67.79999999999995px;letter-spacing:0.2px;">Pick Answer</div></div>
<div class="card" style="left:1448.2px;top:426.6px;width:157.4px;height:110.8px"><div class="clabel" style="top:68.39999999999998px;letter-spacing:-0.3px;">Pick Image</div></div>
<div class="card" style="left:1622.5px;top:426.6px;width:157.2px;height:110.8px"><div class="clabel" style="top:70.39999999999998px;letter-spacing:0.4px;">Short Answer</div></div>
<div class="card" style="left:1273.2px;top:553.5px;width:157.4px;height:110.8px"><div class="clabel" style="top:69.29999999999995px;letter-spacing:0.3px;">Spinner Wheel</div></div>
<div class="card" style="left:1448.2px;top:553.5px;width:157.4px;height:110.8px"><div class="clabel" style="top:68.5px;letter-spacing:-0.2px;">Match Pairs</div></div>
<div class="card" style="left:1622.5px;top:553.5px;width:157.2px;height:110.8px"><div class="clabel" style="top:68.5px;letter-spacing:-0.1px;">Correct Order</div></div>
<div class="card" style="left:1273.2px;top:779.6px;width:157.4px;height:111px"><div class="clabel" style="top:68.39999999999998px;letter-spacing:0.5px;">Poll</div></div>
<div class="card" style="left:1448.2px;top:779.6px;width:157.4px;height:111px"><div class="clabel" style="top:68.39999999999998px;letter-spacing:-0.2px;">Open Ended</div></div>
<div class="card" style="left:1622.5px;top:779.6px;width:157.2px;height:111px"><div class="clabel" style="top:68.39999999999998px;letter-spacing:0.3px;">Word Cloud</div></div>
<div class="card" style="left:1273.2px;top:906.4px;width:157.4px;height:111px"></div>
<div class="card dimc" style="left:1448.2px;top:906.4px;width:157.4px;height:111px"></div>
<div class="card" style="left:1622.5px;top:906.4px;width:157.2px;height:111px"></div>
<svg style="position:absolute;left:0;top:0;pointer-events:none" width="1915" height="1076" viewBox="0 0 1915 1076" ><circle cx="1340.4" cy="467.8" r="10.6" fill="#555b80"/><path d="M1335,468.2 L1338.8,471.8 L1346.2,464" fill="none" stroke="#fff" stroke-width="2.6" stroke-linejoin="round" stroke-linecap="round"/><circle cx="1364.6" cy="467.8" r="10.6" fill="#b3b7d0"/><path d="M1360.6,463.8 L1368.6,471.8 M1368.6,463.8 L1360.6,471.8" fill="none" stroke="#fff" stroke-width="2.6" stroke-linecap="round"/><path d="M1514,452.4 H1539.4 C1540.6,452.4 1541.6,453.4 1541.6,454.6 V474 C1541.6,475.2 1540.6,476.2 1539.4,476.2 H1522.4 L1517,482.4 V476.2 H1514 C1512.8,476.2 1511.8,475.2 1511.8,474 V454.6 C1511.8,453.4 1512.8,452.4 1514,452.4Z" fill="#555b80"/><rect x="1514.4" y="455" width="24.6" height="17" rx="1.2" fill="#fff"/><path d="M1514.2,472.4 V466.4 L1520.4,461.2 L1524.6,464.8 L1532.4,457.8 L1539.2,463.8 V472.4Z" fill="#555b80"/><circle cx="1518.2" cy="459" r="1.9" fill="#b3b7d0"/><path d="M1716.6,470 V454.4 C1716.6,452.6 1715.2,451.2 1713.4,451.2 H1680.4 C1678.6,451.2 1677.2,452.6 1677.2,454.4 V474.4 C1677.2,476.2 1678.6,477.6 1680.4,477.6 H1702" fill="none" stroke="#b9bdd6" stroke-width="3.1"/><path d="M1684.6,460.2 H1694.6 M1689.6,460.2 V470.2" fill="none" stroke="#555b80" stroke-width="2.9"/><rect x="1697.4" y="457.8" width="2.6" height="13.6" fill="#b3b7d0"/><circle cx="1714.4" cy="477.6" r="8.4" fill="#555b80"/><path d="M1710,478 L1713,480.8 L1719,474.4" fill="none" stroke="#fff" stroke-width="2.4" stroke-linejoin="round" stroke-linecap="round"/><circle cx="1352.8" cy="594.2" r="19" fill="#b3b7d0"/><path d="M1352.8,594.2 L1348.7,577.3 A17.4,17.4 0 0 1 1356.9,577.3Z" fill="#555b80"/><path d="M1352.8,594.2 L1365.4,582.2 A17.4,17.4 0 0 1 1369.5,589.3Z" fill="#555b80"/><path d="M1352.8,594.2 L1369.5,599.1 A17.4,17.4 0 0 1 1365.4,606.2Z" fill="#555b80"/><path d="M1352.8,594.2 L1356.9,611.1 A17.4,17.4 0 0 1 1348.7,611.1Z" fill="#555b80"/><path d="M1352.8,594.2 L1340.2,606.2 A17.4,17.4 0 0 1 1336.1,599.1Z" fill="#555b80"/><path d="M1352.8,594.2 L1336.1,589.3 A17.4,17.4 0 0 1 1340.2,582.2Z" fill="#555b80"/><circle cx="1352.8" cy="594.2" r="7" fill="#b3b7d0"/><circle cx="1352.8" cy="594.2" r="5.3" fill="#fff"/><circle cx="1352.8" cy="594.2" r="3" fill="#555b80"/><rect x="1508.2" y="586" width="15" height="15" rx="3.2" fill="#555b80"/><path d="M1523.2,593.4 H1525.6 V583.6 H1530" fill="none" stroke="#b3b7d0" stroke-width="2"/><rect x="1530" y="576" width="15" height="15" rx="3.2" fill="#555b80"/><path d="M1534,583.6 L1536.6,586 L1541.4,580.8" fill="none" stroke="#fff" stroke-width="2" stroke-linejoin="round" stroke-linecap="round"/><rect x="1530" y="596.6" width="15" height="14.6" rx="3.2" fill="#b3b7d0"/><circle cx="1688.6" cy="584.4" r="7.6" fill="#b3b7d0"/><circle cx="1712.6" cy="605.2" r="7.6" fill="#b3b7d0"/><circle cx="1700.6" cy="594.4" r="10.4" fill="#555b80" stroke="#fff" stroke-width="1.2"/><rect x="1338" y="819.4" width="7.2" height="16.2" fill="#555b80"/><rect x="1349" y="806.2" width="7.2" height="29.4" fill="#555b80"/><rect x="1360" y="812" width="7.2" height="23.6" fill="#b3b7d0"/><circle cx="1526.6" cy="804.6" r="2.5" fill="#b3b7d0"/><path d="M1514.6,808.8 H1538.8 C1540.6,808.8 1542,810.2 1542,812 V823.6 L1532.6,832.8 H1514.6 C1512.8,832.8 1511.4,831.4 1511.4,829.6 V812 C1511.4,810.2 1512.8,808.8 1514.6,808.8Z" fill="#555b80"/><path d="M1542,823.6 L1532.6,832.8 V826 C1532.6,824.6 1533.6,823.6 1535,823.6Z" fill="#b3b7d0"/><path d="M1516.6,815.6 H1537 M1516.6,820.6 H1537 M1516.6,825.6 H1530" stroke="#fff" stroke-width="2.1" fill="none"/><rect x="1525.3" y="804.4" width="2.6" height="9.2" rx="1.3" fill="#c3c6da"/><path d="M1688.6,832 C1684.2,832 1681,829.2 1681,825.6 C1681,822.2 1683.6,819.6 1687,819.2 C1687.4,813.6 1691.8,809.6 1697,809.6 C1701.2,809.6 1704.6,811.8 1706.2,815.2 C1707,814.8 1708,814.6 1709,814.6 C1712.8,814.6 1715.6,817.4 1715.6,821 C1718.4,821.6 1720.2,823.8 1720.2,826.4 C1720.2,829.6 1717.6,832 1714.2,832Z" fill="#555b80"/><path d="M1343,958 C1349,956 1352,948 1356,944 C1358.5,941.6 1361.5,941.6 1364,944 C1368,948 1370,956 1375.4,958Z" fill="#b3b7d0"/><path d="M1331,958 C1338,956 1341,946 1346,942 C1348.5,940 1351.2,940.2 1353.2,942 L1356.4,945.6 C1352,950 1349,956 1344.4,958Z" fill="#555b80"/><path d="M1515.6,967.4 C1511.8,967.4 1509.4,965 1509.4,962 C1509.4,959 1511.8,956.8 1514.8,956.6 C1515.6,953.8 1518,952 1520.6,952.4 L1532.6,952.4 C1535.2,952 1537.6,953.8 1538.4,956.6 C1541.4,956.8 1543.8,959 1543.8,962 C1543.8,965 1541.4,967.4 1537.6,967.4Z" fill="#d5d7e5"/><path d="M1526.6,934.8 C1531.4,934.8 1534.8,938.4 1534.8,942.6 C1534.8,946.4 1531.8,948.4 1530.8,951 V954 C1530.8,955.2 1530,956 1528.8,956 H1524.4 C1523.2,956 1522.4,955.2 1522.4,954 V951 C1521.4,948.4 1518.4,946.4 1518.4,942.6 C1518.4,938.4 1521.8,934.8 1526.6,934.8Z" fill="#adb0c8" stroke="#fff" stroke-width="1.2"/><path d="M1524.4,958.2 H1528.8" stroke="#adb0c8" stroke-width="1.6"/><path d="M1526.6,929.4 V932.6 M1517.6,933 L1519.6,935.2 M1535.6,933 L1533.6,935.2 M1513.6,942.4 H1516.4 M1536.8,942.4 H1539.6" stroke="#d5d7e5" stroke-width="2" stroke-linecap="round"/><circle cx="1583.4" cy="926.8" r="12.6" fill="#6f5fc4"/><path d="M1576.8,922.4 L1579.6,925.8 L1583.4,920.4 L1587.2,925.8 L1590,922.4 L1588.8,931 H1578Z" fill="#fff"/><circle cx="1576.6" cy="921.8" r="1.2" fill="#fff"/><circle cx="1583.4" cy="919.8" r="1.2" fill="#fff"/><circle cx="1590.2" cy="921.8" r="1.2" fill="#fff"/><path d="M1708.6,943 C1715,943 1720.2,948 1720.2,954.2 C1720.2,956.6 1719.4,958.8 1718.2,960.6 L1719.6,966 L1714.4,964 C1712.6,965 1710.6,965.5 1708.6,965.5 C1702.2,965.5 1697,960.4 1697,954.2 C1697,948 1702.2,943 1708.6,943Z" fill="#b3b7d0"/><path d="M1696.6,929.8 C1704.4,929.8 1710.6,935.8 1710.6,943.4 C1710.6,951 1704.4,957 1696.6,957 C1693.8,957 1691.2,956.2 1689,954.8 L1682.8,956.8 L1684.6,951 C1683.2,948.8 1682.6,946.2 1682.6,943.4 C1682.6,935.8 1688.8,929.8 1696.6,929.8Z" fill="#555b80" stroke="#fff" stroke-width="1.2"/></svg>
<div class="onum" style="left:1683.6px;top:578.6px;font-size:11px">1</div><div class="onum" style="left:1695.6px;top:588.2px;font-size:14.5px">2</div><div class="onum" style="left:1707.6px;top:599.6px;font-size:11px">3</div>
<svg style="position:absolute;left:1690px;top:934px" width="14" height="18" viewBox="0 0 14 18"></svg>
<div class="qmark">?</div>
<div class="ptrack"></div><div class="pthumb"></div>
<div id="ahead"></div>
<svg style="position:absolute;left:393px;top:193px" width="26" height="24" viewBox="0 0 26 24"><path d="M12,3.6 L3.6,12 L12,20.4 M4.4,12 H22.4" fill="none" stroke="#4a4a4a" stroke-width="3.4" stroke-linecap="round" stroke-linejoin="round"/></svg>
<div class="atitle">How are you today</div>
<div class="eyebg"></div>
<svg style="position:absolute;left:758px;top:196px" width="22" height="18" viewBox="0 0 22 18"><path d="M1,9 C4,3.6 7.4,1.8 11,1.8 C14.6,1.8 18,3.6 21,9 C18,14.4 14.6,16.2 11,16.2 C7.4,16.2 4,14.4 1,9Z" fill="#555b80"/><circle cx="11" cy="9" r="5" fill="#fff"/><circle cx="11" cy="9" r="3.6" fill="#555b80"/><circle cx="9.6" cy="7.6" r="1.3" fill="#fff"/></svg>
<svg style="position:absolute;left:812px;top:194px" width="22" height="22" viewBox="0 0 22 22"><circle cx="11" cy="11" r="10.2" fill="#72bf72"/><path d="M5.6,11.4 L9.4,15 L16.4,7.6" fill="none" stroke="#fff" stroke-width="2.8" stroke-linejoin="round" stroke-linecap="round"/></svg>
<div class="hdiv"></div>
<svg style="position:absolute;left:876px;top:194px" width="24" height="20" viewBox="0 0 24 20"><path d="M8.2,2 L2,7.4 L8.2,12.8Z" fill="#252a3d"/><path d="M7,7.4 H15 C18.6,7.4 20.6,9.6 20.6,12.2 C20.6,14.8 18.6,17 15,17 H10.4" fill="none" stroke="#252a3d" stroke-width="2.2" stroke-linecap="round"/></svg>
<svg style="position:absolute;left:919px;top:194px" width="24" height="20" viewBox="0 0 24 20"><path d="M15.8,2 L22,7.4 L15.8,12.8Z" fill="#c3c4ca"/><path d="M17,7.4 H9 C5.4,7.4 3.4,9.6 3.4,12.2 C3.4,14.8 5.4,17 9,17 H13.6" fill="none" stroke="#c3c4ca" stroke-width="2.2" stroke-linecap="round"/></svg>
<svg style="position:absolute;left:1702px;top:191px" width="28" height="25" viewBox="0 0 28 25"><path d="M9,5.6 H4.4 C3.6,5.6 3,6.2 3,7 V21 C3,21.8 3.6,22.4 4.4,22.4 H18.4 C19.2,22.4 19.8,21.8 19.8,21 V17.6" fill="none" stroke="#252a3d" stroke-width="2.4" stroke-linecap="butt"/><path d="M18.2,2.4 L26.2,9 L18.2,15.6 V11.8 C13.6,11.8 10.8,13.6 9.8,18.2 C7.6,12.2 11.4,6.4 18.2,6.2Z" fill="#252a3d"/></svg>
<svg style="position:absolute;left:1750px;top:191px" width="24" height="24" viewBox="0 0 24 24"><polygon points="23.37,9.70 23.37,14.30 20.22,14.54 19.61,16.01 21.67,18.41 18.41,21.67 16.01,19.61 14.54,20.22 14.30,23.37 9.70,23.37 9.46,20.22 7.99,19.61 5.59,21.67 2.33,18.41 4.39,16.01 3.78,14.54 0.63,14.30 0.63,9.70 3.78,9.46 4.39,7.99 2.33,5.59 5.59,2.33 7.99,4.39 9.46,3.78 9.70,0.63 14.30,0.63 14.54,3.78 16.01,4.39 18.41,2.33 21.67,5.59 19.61,7.99 20.22,9.46" fill="#252a3d" stroke="#252a3d" stroke-width="1.2" stroke-linejoin="round"/><circle cx="12" cy="12" r="4" fill="#fff"/></svg>
<div class="ibtn">i</div>
</div>
<div id="statusline"></div><div id="status"></div>
<div class="st" style="left:20px;letter-spacing:-0.28px">Slide 1 of 1</div><div class="st" style="left:101.4px">English</div>
<div class="st" style="left:1383.5px">Notes</div><div class="st" style="left:1454px">Comments</div><div class="st" style="left:1825.4px">152%</div>
<div style="position:absolute;left:1525px;top:1053px;width:37px;height:23px;background:#5c5c5c"></div>
<svg style="position:absolute;left:0;top:0" width="1915" height="1076" viewBox="0 0 1915 1076"><path d="M1366,1062.4 H1379 M1366,1065.4 H1379 M1366,1068.4 H1379 M1366,1059.6 H1379" stroke="#f0f0f0" stroke-width="1"/><path d="M1370.2,1059 L1372.5,1056.2 L1374.8,1059Z" fill="#f0f0f0"/><rect x="1366" y="1059" width="13" height="1.2" fill="#3e3e3e"/><path d="M1366,1059.8 H1370 M1375,1059.8 H1379" stroke="#f0f0f0" stroke-width="1"/><path d="M1437.2,1058.8 H1449.6 V1067.4 H1443.4 L1440.2,1070.6 V1067.4 H1437.2Z" fill="#f0f0f0"/><rect x="1536.4" y="1058" width="13.4" height="12.6" fill="none" stroke="#f0f0f0" stroke-width="1.3"/><rect x="1536.4" y="1058" width="3.6" height="12.6" fill="#f0f0f0"/><rect x="1542.4" y="1060.4" width="5.2" height="3.4" fill="none" stroke="#f0f0f0" stroke-width="1.2"/><path d="M1541.6,1067.6 H1548.4" stroke="#f0f0f0" stroke-width="1.2"/><rect x="1572" y="1059.6" width="6.4" height="4" fill="#f0f0f0"/><rect x="1581" y="1059.6" width="6.4" height="4" fill="#f0f0f0"/><rect x="1572" y="1066" width="6.4" height="4" fill="#f0f0f0"/><rect x="1581" y="1066" width="6.4" height="4" fill="#f0f0f0"/><path d="M1615.4,1060 C1613,1058.6 1610.8,1058.4 1608.4,1058.6 V1069.4 C1610.8,1069.2 1613,1069.4 1615.4,1070.8 C1617.8,1069.4 1620,1069.2 1622.4,1069.4 V1058.6 C1620,1058.4 1617.8,1058.6 1615.4,1060Z M1615.4,1060 V1070.8" fill="none" stroke="#f0f0f0" stroke-width="1.1"/><path d="M1610,1061.6 H1613.6 M1610,1064 H1613.6 M1610,1066.4 H1613.6 M1617.2,1061.6 H1620.8 M1617.2,1064 H1620.8 M1617.2,1066.4 H1620.8" stroke="#f0f0f0" stroke-width="0.8"/><path d="M1644,1059 H1658.6 M1645.4,1059 V1066.6 H1657.2 V1059 M1651.3,1066.6 V1070 M1648.2,1070.4 H1654.4" fill="none" stroke="#f0f0f0" stroke-width="1.3"/><rect x="1649" y="1061.4" width="4.6" height="2.6" fill="#f0f0f0"/><path d="M1677.4,1064.4 H1684.4" stroke="#f0f0f0" stroke-width="1.6"/><rect x="1692.4" y="1063" width="99" height="2.8" rx="1.4" fill="#6c6c6c"/><circle cx="1748.6" cy="1064.4" r="7.6" fill="#a9a9a9"/><path d="M1799.2,1064.4 H1806.6 M1802.9,1060.7 V1068.1" stroke="#f0f0f0" stroke-width="1.6"/><rect x="1878.4" y="1058.2" width="12.2" height="12.2" fill="none" stroke="#f0f0f0" stroke-width="1.2"/><path d="M1884.5,1058.2 V1070.4 M1878.4,1064.3 H1890.6" stroke="#f0f0f0" stroke-width="0.8" stroke-dasharray="1.4 1.2"/><path d="M1881,1061 L1883,1063 M1888,1061 L1886,1063 M1881,1067.6 L1883,1065.6 M1888,1067.6 L1886,1065.6" stroke="#f0f0f0" stroke-width="1"/></svg>
</body></html>
